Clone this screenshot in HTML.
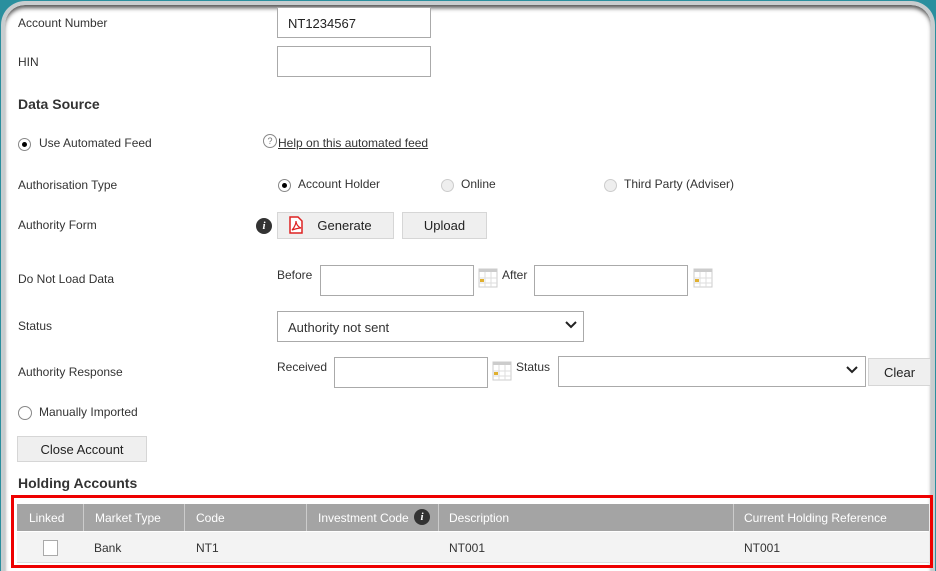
<!DOCTYPE html>
<html style="height:571px;overflow:hidden"><head><style>
body{margin:0;width:936px;height:571px;overflow:hidden;background:#2a8f9e;font-family:"Liberation Sans",sans-serif;font-size:12px;color:#333;position:relative}
.wrap{position:absolute;left:0;top:0;width:936px;height:571px;overflow:hidden}
.panel{position:absolute;left:1px;top:1px;width:926px;height:566px;background:#fff;border:4px solid #c8cdcf;border-bottom:none;border-radius:24px 24px 0 0;box-shadow:inset 0 4px 4px -1px #555;}
.a{position:absolute;white-space:nowrap}
.in{position:absolute;border:1px solid #aaa;background:#fff;box-sizing:border-box}
.btn{position:absolute;background:#efefef;border:1px solid #d6d6d6;box-sizing:border-box;text-align:center;font-size:13px;color:#222}
.rad{position:absolute;width:13px;height:13px;border:1px solid #888;border-radius:50%;box-sizing:border-box;background:#fff}
.rad.on::after{content:"";position:absolute;left:3px;top:3px;width:5px;height:5px;border-radius:50%;background:#000}
.rad.dis{border-color:#ccc;background:#eee}
.cal{position:absolute;width:20px;height:20px}
h3{margin:0;font-size:14px;font-weight:bold;position:absolute;color:#333}
</style></head><body><div class="wrap">
<div class="panel"></div>
<div class="a" style="left:18px;top:16px">Account Number</div>
<div class="in" style="left:277px;top:7px;width:154px;height:31px;padding:8px 10px;font-size:13px;color:#222">NT1234567</div>
<div class="a" style="left:18px;top:55px">HIN</div>
<div class="in" style="left:277px;top:46px;width:154px;height:31px"></div>
<h3 style="left:18px;top:96px">Data Source</h3>
<div class="rad on" style="left:18px;top:138px"></div>
<div class="a" style="left:39px;top:136px">Use Automated Feed</div>
<div class="a" style="left:263px;top:134px;width:12px;height:12px;border:1px solid #888;border-radius:50%;font-size:9px;text-align:center;line-height:12px;color:#777">?</div>
<div class="a" style="left:278px;top:136px;text-decoration:underline">Help on this automated feed</div>
<div class="a" style="left:18px;top:178px">Authorisation Type</div>
<div class="rad on" style="left:278px;top:179px"></div>
<div class="a" style="left:298px;top:177px">Account Holder</div>
<div class="rad dis" style="left:441px;top:179px"></div>
<div class="a" style="left:461px;top:177px">Online</div>
<div class="rad dis" style="left:604px;top:179px"></div>
<div class="a" style="left:624px;top:177px">Third Party (Adviser)</div>
<div class="a" style="left:18px;top:218px">Authority Form</div>
<div class="a" style="left:256px;top:218px;width:16px;height:16px;border-radius:50%;background:#333;color:#fff;font-size:11px;font-weight:bold;font-style:italic;text-align:center;line-height:16px;font-family:'Liberation Serif',serif">i</div>
<div class="btn" style="left:277px;top:212px;width:117px;height:27px;line-height:25px;padding-left:18px">Generate</div>
<svg class="a" style="left:288px;top:216px" width="16" height="18" viewBox="0 0 16 18"><path d="M2 1h8l4 4v12H2z" fill="#fff" stroke="#d22" stroke-width="1.5"/><path d="M4 14c3-3 4-7 4-9 0 3 2 6 5 7-3 0-6 1-9 2z" fill="none" stroke="#d22" stroke-width="1.2"/></svg>
<div class="btn" style="left:402px;top:212px;width:85px;height:27px;line-height:25px">Upload</div>
<div class="a" style="left:18px;top:272px">Do Not Load Data</div>
<div class="a" style="left:277px;top:268px">Before</div>
<div class="in" style="left:320px;top:265px;width:154px;height:31px"></div>
<svg class="cal" style="left:478px;top:268px" viewBox="0 0 20 20"><rect x="1" y="1" width="18" height="18" fill="#fff" stroke="#ccc"/><rect x="1" y="1" width="18" height="3" fill="#ccc"/><path d="M7 4v15M13 4v15M1 10h18M1 15h18" stroke="#ddd"/><rect x="2" y="11" width="4" height="3" fill="#e0b030"/></svg>
<div class="a" style="left:502px;top:268px">After</div>
<div class="in" style="left:534px;top:265px;width:154px;height:31px"></div>
<svg class="cal" style="left:693px;top:268px" viewBox="0 0 20 20"><rect x="1" y="1" width="18" height="18" fill="#fff" stroke="#ccc"/><rect x="1" y="1" width="18" height="3" fill="#ccc"/><path d="M7 4v15M13 4v15M1 10h18M1 15h18" stroke="#ddd"/><rect x="2" y="11" width="4" height="3" fill="#e0b030"/></svg>
<div class="a" style="left:18px;top:319px">Status</div>
<div class="in" style="left:277px;top:311px;width:307px;height:31px;padding:8px 10px;font-size:13px">Authority not sent</div>
<svg class="a" style="left:565px;top:321px" width="12" height="8" viewBox="0 0 12 8"><path d="M1 1l5 5 5-5" fill="none" stroke="#222" stroke-width="2"/></svg>
<div class="a" style="left:18px;top:365px">Authority Response</div>
<div class="a" style="left:277px;top:360px">Received</div>
<div class="in" style="left:334px;top:357px;width:154px;height:31px"></div>
<svg class="cal" style="left:492px;top:361px" viewBox="0 0 20 20"><rect x="1" y="1" width="18" height="18" fill="#fff" stroke="#ccc"/><rect x="1" y="1" width="18" height="3" fill="#ccc"/><path d="M7 4v15M13 4v15M1 10h18M1 15h18" stroke="#ddd"/><rect x="2" y="11" width="4" height="3" fill="#e0b030"/></svg>
<div class="a" style="left:516px;top:360px">Status</div>
<div class="in" style="left:558px;top:356px;width:308px;height:31px"></div>
<svg class="a" style="left:846px;top:366px" width="12" height="8" viewBox="0 0 12 8"><path d="M1 1l5 5 5-5" fill="none" stroke="#222" stroke-width="2"/></svg>
<div class="btn" style="left:868px;top:358px;width:63px;height:28px;line-height:27px">Clear</div>
<div class="rad" style="left:18px;top:406px;width:14px;height:14px"></div>
<div class="a" style="left:39px;top:405px">Manually Imported</div>
<div class="btn" style="left:17px;top:436px;width:130px;height:26px;line-height:25px">Close Account</div>
<h3 style="left:18px;top:475px">Holding Accounts</h3>
<div class="a" style="left:11px;top:495px;width:922px;height:73px;border:3px solid #e00;box-sizing:border-box"></div>
<div class="a" style="left:17px;top:504px;width:912px;height:27px;background:#a4a4a4"></div>
<div class="a" style="left:17px;top:532px;width:912px;height:30px;background:#f3f3f3;border-bottom:1px solid #ddd"></div>
<div class="a" style="left:83px;top:504px;width:1px;height:27px;background:#ccc"></div>
<div class="a" style="left:184px;top:504px;width:1px;height:27px;background:#ccc"></div>
<div class="a" style="left:306px;top:504px;width:1px;height:27px;background:#ccc"></div>
<div class="a" style="left:438px;top:504px;width:1px;height:27px;background:#ccc"></div>
<div class="a" style="left:733px;top:504px;width:1px;height:27px;background:#ccc"></div>
<div class="a" style="left:29px;top:511px;color:#fff">Linked</div>
<div class="a" style="left:95px;top:511px;color:#fff">Market Type</div>
<div class="a" style="left:196px;top:511px;color:#fff">Code</div>
<div class="a" style="left:318px;top:511px;color:#fff">Investment Code</div>
<div class="a" style="left:414px;top:509px;width:16px;height:16px;border-radius:50%;background:#333;color:#fff;font-size:11px;font-weight:bold;font-style:italic;text-align:center;line-height:16px;font-family:'Liberation Serif',serif">i</div>
<div class="a" style="left:449px;top:511px;color:#fff">Description</div>
<div class="a" style="left:744px;top:511px;color:#fff">Current Holding Reference</div>
<div class="a" style="left:43px;top:540px;width:13px;height:14px;border:1px solid #aaa;background:#fff"></div>
<div class="a" style="left:94px;top:541px">Bank</div>
<div class="a" style="left:196px;top:541px">NT1</div>
<div class="a" style="left:449px;top:541px">NT001</div>
<div class="a" style="left:744px;top:541px">NT001</div>
</div></body></html>
